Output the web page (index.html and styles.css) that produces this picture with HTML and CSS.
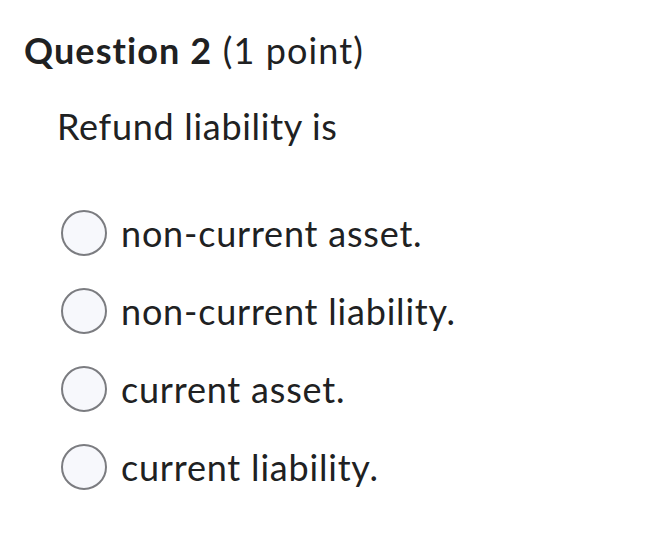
FILE: index.html
```html
<!DOCTYPE html>
<html>
<head>
<meta charset="utf-8">
<link rel="stylesheet" href="styles.css">
</head>
<body>
<div class="question">
  <h2 class="title"><span class="title-main">Question 2</span> <span class="title-points">(1 point)</span></h2>
  <div class="body">
    <p class="prompt">Refund liability is</p>
    <ul class="options">
      <li class="option"><span class="radio"></span><span class="label">non-current asset.</span></li>
      <li class="option"><span class="radio"></span><span class="label">non-current liability.</span></li>
      <li class="option"><span class="radio"></span><span class="label">current asset.</span></li>
      <li class="option"><span class="radio"></span><span class="label">current liability.</span></li>
    </ul>
  </div>
</div>
</body>
</html>
```
FILE: styles.css
```css
html, body {
  margin: 0;
  padding: 0;
  background: #ffffff;
}
body {
  font-family: Lato, "Liberation Sans", sans-serif;
  color: #202122;
}
.question {
  padding: 28px 0 0 24px;
}
.title {
  margin: 0;
  font-size: 36px;
  line-height: 44px;
  font-weight: 400;
  letter-spacing: 1.1px;
}
.title-main {
  font-weight: 700;
}
.body {
  padding-left: 33px;
}
.prompt {
  margin: 32px 0 0 0;
  font-size: 36px;
  line-height: 44px;
  letter-spacing: 0.7px;
}
.options {
  list-style: none;
  margin: 62px 0 0 0;
  padding: 0 0 0 4px;
  display: flex;
  flex-direction: column;
  gap: 32px;
}
.option {
  display: flex;
  align-items: center;
  gap: 14px;
  height: 46px;
}
.radio {
  width: 42px;
  height: 42px;
  border: 2px solid #7b7c80;
  border-radius: 50%;
  background: #f7f8fc;
  flex: none;
}
.label {
  font-size: 36px;
  line-height: 44px;
  letter-spacing: 0.8px;
}
```
